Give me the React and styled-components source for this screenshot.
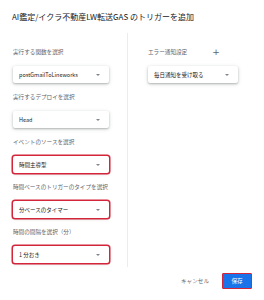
import React from "react"
import styled, { createGlobalStyle } from "styled-components"

const Global = createGlobalStyle`
  html, body {
    margin: 0;
    padding: 0;
    background: #fff;
  }
  body {
    font-family: "Noto Sans CJK JP", "Noto Sans", Roboto, sans-serif;
    color: #202124;
  }
`

const leftFields = [
  { label: "実行する関数を選択", value: "postGmailToLineworks" },
  { label: "実行するデプロイを選択", value: "Head" },
  { label: "イベントのソースを選択", value: "時間主導型", marked: true },
  { label: "時間ベースのトリガーのタイプを選択", value: "分ベースのタイマー", marked: true },
  { label: "時間の間隔を選択（分）", value: "1 分おき", marked: true },
]

const App = () => {
  return (
    <Dialog>
      <Global />
      <Title>AI鑑定/イクラ不動産LW転送GAS のトリガーを追加</Title>
      <Columns>
        <LeftCol>
          {leftFields.map(f => (
            <Field key={f.label}>
              <Label>{f.label}</Label>
              <Select marked={f.marked}>
                <span>{f.value}</span>
                <Caret />
              </Select>
            </Field>
          ))}
        </LeftCol>
        <RightCol>
          <Field>
            <LabelRow>
              <Label>エラー通知設定</Label>
              <Plus>+</Plus>
            </LabelRow>
            <Select wide>
              <span>毎日通知を受け取る</span>
              <Caret />
            </Select>
          </Field>
        </RightCol>
      </Columns>
      <Footer>
        <TextButton>キャンセル</TextButton>
        <SaveButton>保存</SaveButton>
      </Footer>
    </Dialog>
  )
}

const Dialog = styled.div`
  width: 264px;
  height: 300px;
  box-sizing: border-box;
  padding-top: 11px;
  display: flex;
  flex-direction: column;
`

const Title = styled.div`
  padding-left: 12px;
  font-size: 8px;
  line-height: 12px;
  color: #202124;
  white-space: nowrap;
`

const Columns = styled.div`
  display: grid;
  grid-template-columns: 128px 1fr;
  margin-top: 10px;
  height: 234px;
`

const LeftCol = styled.div`
  border-right: 1px solid #ececec;
  padding: 15px 0 0 13px;
  display: flex;
  flex-direction: column;
  gap: 10px;
`

const RightCol = styled.div`
  padding: 15px 0 0 20px;
`

const Field = styled.div`
  display: flex;
  flex-direction: column;
  gap: 10px;
`

const LabelRow = styled.div`
  display: flex;
  align-items: center;
  gap: 25px;
`

const Label = styled.div`
  font-size: 5.6px;
  line-height: 8px;
  color: #5f6368;
  white-space: nowrap;
`

const Plus = styled.span`
  font-family: "DejaVu Sans", sans-serif;
  font-size: 9px;
  line-height: 8px;
  color: #5f6368;
`

const Select = styled.div`
  width: ${p => (p.wide ? "90px" : "96px")};
  height: 17px;
  box-sizing: border-box;
  padding: 0 9px 0 6px;
  display: flex;
  align-items: center;
  justify-content: space-between;
  background: #fff;
  border-radius: 2px;
  font-size: 5.5px;
  color: #202124;
  white-space: nowrap;
  box-shadow: ${p =>
    p.marked
      ? "0 0 0 1.5px #d3263a, 0 1px 3px rgba(60,64,67,0.3)"
      : "0 1px 2px rgba(60,64,67,0.3), 0 1px 4px rgba(60,64,67,0.18)"};
`

const Caret = styled.span`
  width: 0;
  height: 0;
  border-left: 2px solid transparent;
  border-right: 2px solid transparent;
  border-top: 2px solid #80868b;
`

const Footer = styled.div`
  display: flex;
  justify-content: flex-end;
  align-items: center;
  gap: 13px;
  padding: 6px 12px 0 0;
`

const TextButton = styled.span`
  font-size: 5.6px;
  color: #5f6368;
`

const SaveButton = styled.button`
  width: 30px;
  height: 16px;
  border: 1.5px solid #d3263a;
  background: #1a73e8;
  color: #fff;
  font-family: inherit;
  font-size: 5.6px;
  padding: 0;
  border-radius: 1px;
`

export default App
